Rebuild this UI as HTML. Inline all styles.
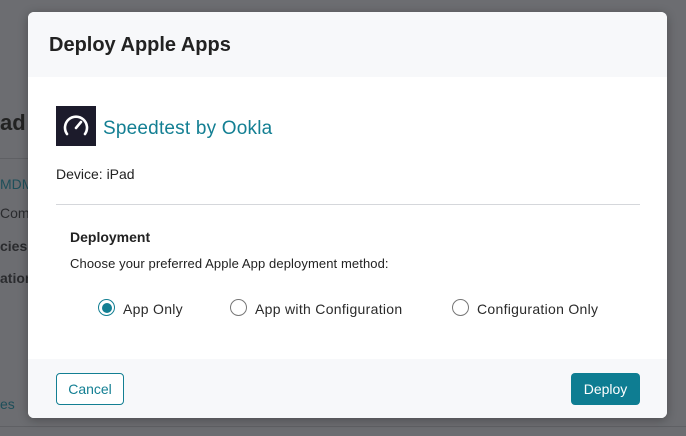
<!DOCTYPE html>
<html><head><style>
body{margin:0;width:686px;height:436px;overflow:hidden;background:#6c6d71;font-family:"Liberation Sans",sans-serif;position:relative}
.bg{position:absolute;color:#2a2b2e;font-size:14px}
.modal{position:absolute;left:28px;top:12px;width:639px;height:406px;background:#fff;border-radius:6px;overflow:hidden;box-shadow:0 2px 10px rgba(0,0,0,.3)}
.hd{height:65px;background:#f7f8fa}
.hd h1{margin:0;position:absolute;left:21px;top:22px;font-size:20px;font-weight:bold;color:#222}
.ft{position:absolute;left:0;top:347px;width:100%;height:59px;background:#f7f8fa}
.abs{position:absolute}
.radio{position:absolute;width:17px;height:17px;border:1px solid #777;border-radius:50%;top:287px;box-sizing:border-box}
.lbl{position:absolute;top:289px;font-size:14px;color:#2a2a2a;letter-spacing:0.3px}
</style></head><body>
<div class="bg" style="left:0;top:110px;font-size:22px;font-weight:bold;color:#222">ad</div>
<div class="bg" style="left:0;top:158px;width:28px;border-top:1px solid #5f6064"></div>
<div class="bg" style="left:0;top:176px;color:#1e4f5a">MDM</div>
<div class="bg" style="left:0;top:205px">Comp</div>
<div class="bg" style="left:0;top:238px;font-weight:bold">cies</div>
<div class="bg" style="left:0;top:270px;font-weight:bold">ation</div>
<div class="bg" style="left:0;top:396px;color:#1e4f5a">es</div>
<div class="bg" style="left:0;top:426px;width:686px;border-top:1px solid #5f6064"></div>
<div class="modal">
<div class="hd"><h1>Deploy Apple Apps</h1></div>
<div class="abs" style="left:28px;top:94px;width:40px;height:40px;background:#1c1b2b">
<svg width="40" height="40" viewBox="0 0 40 40"><path d="M11 28 A11 11 0 1 1 29 28" fill="none" stroke="#fff" stroke-width="2.6" stroke-linecap="round"/><path d="M20 22 L25 16" stroke="#fff" stroke-width="2.6" stroke-linecap="round"/></svg></div>
<div class="abs" style="left:75px;top:106px;font-size:19px;color:#137f93;letter-spacing:0.2px">Speedtest by Ookla</div>
<div class="abs" style="left:28px;top:154px;font-size:14px;color:#222">Device: iPad</div>
<div class="abs" style="left:28px;top:192px;width:584px;border-top:1px solid #d5d7db"></div>
<div class="abs" style="left:42px;top:217px;font-size:14px;font-weight:bold;color:#222">Deployment</div>
<div class="abs" style="left:42px;top:244px;font-size:13px;color:#222;letter-spacing:0.1px">Choose your preferred Apple App deployment method:</div>
<div class="radio" style="left:70px;border:1px solid #137f93"><div style="position:absolute;left:2.5px;top:2.5px;width:10px;height:10px;border-radius:50%;background:#137f93"></div></div>
<div class="lbl" style="left:95px">App Only</div>
<div class="radio" style="left:202px"></div>
<div class="lbl" style="left:227px">App with Configuration</div>
<div class="radio" style="left:424px"></div>
<div class="lbl" style="left:449px">Configuration Only</div>
<div class="ft">
<div class="abs" style="left:28px;top:14px;width:66px;height:30px;border:1px solid #137f93;border-radius:4px;color:#137f93;font-size:14px;line-height:30px;text-align:center;background:#fff">Cancel</div>
<div class="abs" style="left:543px;top:14px;width:69px;height:32px;background:#0e7d92;border-radius:4px;color:#fff;font-size:14px;line-height:32px;text-align:center">Deploy</div>
</div>
</div>
</body></html>
